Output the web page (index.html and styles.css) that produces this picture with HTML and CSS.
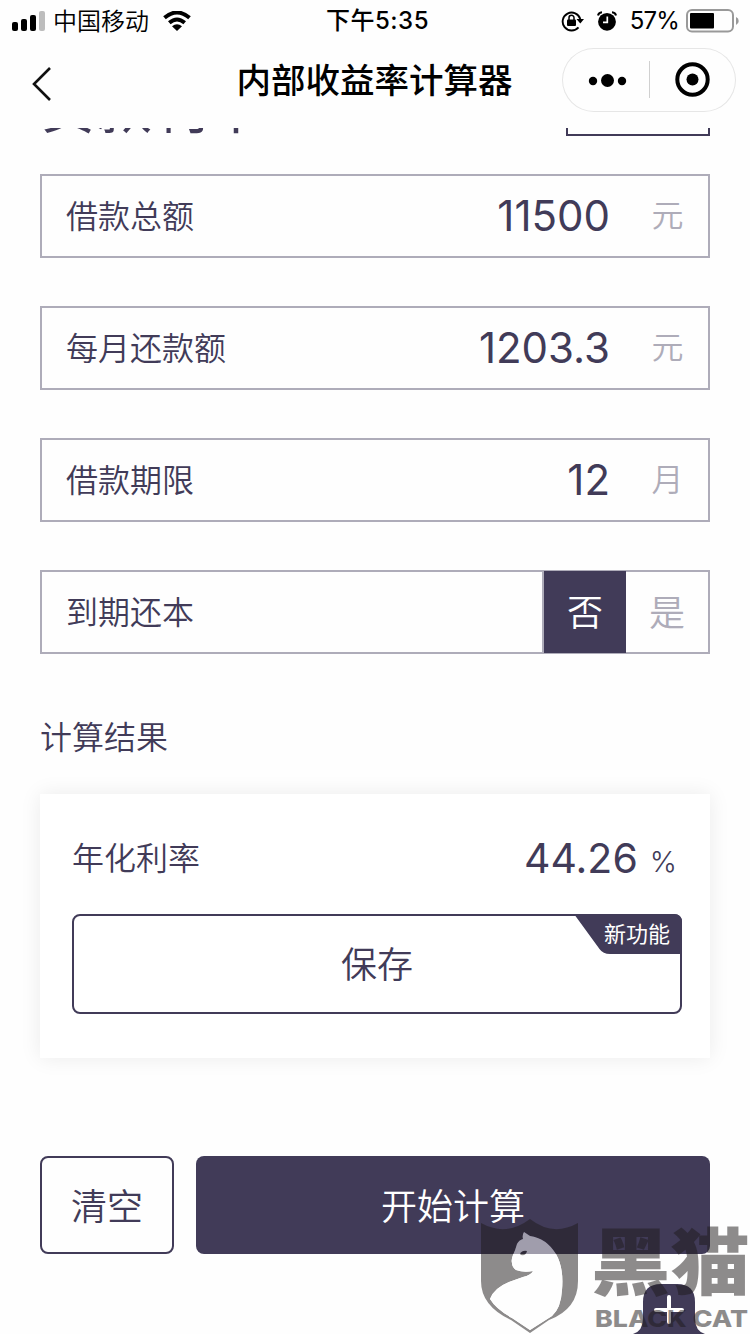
FILE: index.html
```html
<!DOCTYPE html>
<html lang="zh-CN">
<head>
    <meta charset="UTF-8">
    <meta name="viewport" content="width=device-width, initial-scale=1.0">
    <title>内部收益率计算器</title>
    <link rel="stylesheet" href="styles.css">
</head>
<body>
    <div class="status">
        <div class="status-left">
            <svg class="signal" width="34" height="20" viewBox="0 0 34 20">
                <rect x="0" y="11" width="6" height="9" rx="2"/>
                <rect x="9" y="8" width="6" height="12" rx="2"/>
                <rect x="18" y="4" width="6" height="16" rx="2"/>
                <rect x="27" y="0" width="6" height="20" rx="2" fill="#bdbdbd"/>
            </svg>
            <span class="carrier">中国移动</span>
            <svg class="wifi" width="28" height="20" viewBox="0 0 28 20">
                <path d="M1.500 6.800Q14 -3.800 26.500 6.800M6.300 11.800Q14 5.300 21.700 11.800" fill="none" stroke="#000" stroke-width="4"/>
                <path d="M9 15.200Q14 11.300 19 15.200L14 20Z"/>
            </svg>
        </div>
        <span class="time">下午5:35</span>
        <div class="status-right">
            <svg class="lock" width="24" height="22" viewBox="0 0 24 22">
                <path d="M17.500 17.400A9 9 0 1 1 19.300 9" fill="none" stroke="#000" stroke-width="1.900"/>
                <path d="M15.500 9H23L19.300 13.500Z"/>
                <rect x="6" y="9.500" width="9" height="6.500" rx="1"/>
                <path d="M8 10V7.800a2.500 2.500 0 0 1 5 0V10" fill="none" stroke="#000" stroke-width="1.500"/>
            </svg>
            <svg class="alarm" width="20" height="20" viewBox="0 0 20 20">
                <circle cx="10" cy="10.800" r="8.900"/>
                <path d="M1 4.500Q1.500 1.500 5 1.200M19 4.500Q18.500 1.500 15 1.200" fill="none" stroke="#000" stroke-width="2"/>
                <path d="M10.300 5.500V11.300H6" fill="none" stroke="#fff" stroke-width="1.700"/>
            </svg>
            <span class="percent">57%</span>
            <svg class="battery" width="54" height="24" viewBox="0 0 54 24">
                <rect x="1" y="1" width="46" height="21.500" rx="5" fill="none" stroke="#999" stroke-width="2"/>
                <rect x="4" y="4" width="24" height="15.500" rx="1"/>
                <path d="M50 8a4.300 4.300 0 0 1 0 8Z" fill="#999"/>
            </svg>
        </div>
    </div>

    <div class="nav">
        <svg class="back" width="20" height="36" viewBox="0 0 20 36">
            <path d="M18 2L2 18L18 34" fill="none" stroke="#111" stroke-width="2.600"/>
        </svg>
        <h1>内部收益率计算器</h1>
        <div class="capsule">
            <svg width="174" height="64" viewBox="0 0 174 64">
                <circle cx="31" cy="33" r="4.200"/>
                <circle cx="45.500" cy="32.500" r="6.500"/>
                <circle cx="60" cy="33" r="4.200"/>
                <path d="M87.500 13V50" stroke="#d0d0d0"/>
                <circle cx="130.500" cy="31.500" r="15.200" fill="none" stroke="#000" stroke-width="4"/>
                <circle cx="130.500" cy="31.500" r="6"/>
            </svg>
        </div>
    </div>

    <div class="page">
        <div class="mode">
            <h2>贷款利率</h2>
            <div class="mode-select"></div>
        </div>

        <div class="field">
            <label>借款总额</label>
            <span class="value">11500</span>
            <span class="unit">元</span>
        </div>
        <div class="field">
            <label>每月还款额</label>
            <span class="value">1203.3</span>
            <span class="unit">元</span>
        </div>
        <div class="field">
            <label>借款期限</label>
            <span class="value">12</span>
            <span class="unit">月</span>
        </div>
        <div class="field">
            <label>到期还本</label>
            <div class="toggle">
                <span class="option on">否</span>
                <span class="option">是</span>
            </div>
        </div>

        <h3>计算结果</h3>
        <div class="card">
            <div class="rate">
                <label>年化利率</label>
                <span class="rate-value">44.26</span>
                <span class="rate-unit">%</span>
            </div>
            <div class="save">
                保存
                <div class="ribbon">
                    <svg width="108" height="40" viewBox="0 0 108 40">
                        <path d="M0 0H100Q108 0 108 8V40H36Q29 40 25.500 35Z" fill="#413b58"/>
                    </svg>
                    <span>新功能</span>
                </div>
            </div>
        </div>

        <div class="buttons">
            <div class="clear">清空</div>
            <div class="start">开始计算</div>
        </div>
    </div>

    <svg class="add" width="72" height="50" viewBox="0 0 72 50">
        <path d="M0 50Q10 47 10 34V18Q10 0 28 0H44Q62 0 62 18V34Q62 47 72 50Z" fill="#413b58"/>
        <path d="M36 13V38M23 26H49" stroke="#fff" stroke-width="4" stroke-linecap="round"/>
    </svg>

    <svg class="watermark" width="270" height="116" viewBox="0 0 270 116">
        <path fill="#1f1b1b" fill-rule="evenodd" d="M1 5Q26 19 50 1Q73 19 98 5V63Q98 91 69 102L50 115L31 102Q1 88 1 63Z
            M44 14L50 18Q66 20 76 36Q84 50 82 72Q81 90 72 98L50 112L32 100Q16 91 10 81Q14 70 29 64L43 59Q51 57 53 53Q44 55 36 52Q32 49 32 45Q31 42 33 37Q35 33 37 26Q39 22 43 21Q42 17 44 14Z"/>
        <path fill="#fff" d="M44 14L50 18Q66 20 76 36Q84 50 82 72Q81 90 72 98L50 112L32 100Q16 91 10 81Q14 70 29 64L43 59Q51 57 53 53Q44 55 36 52Q32 49 32 45Q31 42 33 37Q35 33 37 26Q39 22 43 21Q42 17 44 14Z"/>
        <path fill="#1f1b1b" d="M40 36Q42 32 47 33Q46 38 41 37Z"/>
        <text class="wm-cn" x="111" y="71" textLength="159" lengthAdjust="spacingAndGlyphs">黑猫</text>
        <text class="wm-en" x="115" y="109" textLength="153" lengthAdjust="spacingAndGlyphs">BLACK CAT</text>
    </svg>
</body>
</html>
```

FILE: styles.css
```css
* {
    margin: 0;
    padding: 0;
    box-sizing: border-box;
}
body {
    position: relative;
    width: 750px;
    height: 1334px;
    overflow: hidden;
    background-color: #fefefe;
    color: #413b58;
    font-family: Inter, "Noto Sans CJK SC", sans-serif;
}
svg {
    display: block;
    flex: none;
}
.status {
    display: grid;
    grid-template-columns: 1fr auto 1fr;
    align-items: center;
    height: 40px;
    padding: 0 10px 0 12px;
    color: #000;
    font-size: 24px;
    line-height: 40px;
}
.status-left,
.status-right {
    display: flex;
    align-items: center;
    height: 40px;
}
.status-right {
    justify-content: flex-end;
}
.carrier {
    margin: 0 14px 0 7px;
    padding-top: 2px;
    font-weight: 350;
}
.time {
    padding: 1px 0 0 3px;
    font-weight: 500;
    letter-spacing: 0.5px;
}
.alarm {
    margin: 0 13px 0 12px;
}
.percent {
    margin-right: 7px;
    padding-top: 1px;
    font-size: 24px;
    letter-spacing: -0.8px;
}

.nav {
    display: grid;
    grid-template-columns: 1fr auto 1fr;
    align-items: center;
    height: 88px;
    padding: 0 14px 8px;
    color: #000;
}
.back {
    margin: 7px 0 0 18px;
}
h1 {
    padding: 2px 1px 0 0;
    font-size: 34.5px;
    font-weight: 500;
    line-height: 50px;
}
.capsule {
    justify-self: end;
    width: 174px;
    height: 64px;
    border-radius: 32px;
    box-shadow: inset 0 0 0 1px #e6e6e6;
}

.page {
    padding: 0 40px;
}
.mode {
    display: flex;
    justify-content: space-between;
    align-items: flex-end;
    height: 8px;
    margin-bottom: 38px;
    overflow: hidden;
}
h2 {
    margin-bottom: -12px;
    font-size: 56px;
    font-weight: 400;
    line-height: 80px;
}
.mode-select {
    width: 144px;
    height: 82px;
    border: solid 2px #413b58;
}
.field {
    display: flex;
    align-items: center;
    height: 84px;
    margin-bottom: 48px;
    border: solid 2px #aeacb9;
    padding-left: 24px;
}
label {
    flex: 1;
    padding-bottom: 5px;
    font-size: 32px;
    font-weight: 350;
}
.value {
    padding-bottom: 2px;
    font-size: 42px;
}
.unit {
    width: 98px;
    padding: 0 0 6px 17px;
    text-align: center;
    font-size: 32px;
    font-weight: 350;
    color: #aeacb9;
}
.toggle {
    display: flex;
    height: 82px;
    border-left: solid 2px #aeacb9;
    font-size: 36px;
    font-weight: 350;
    line-height: 85px;
    text-align: center;
}
.option {
    width: 82px;
    color: #aeacb9;
}
.option.on {
    background-color: #413b58;
    color: #fff;
}

h3 {
    margin-top: 61px;
    font-size: 32px;
    font-weight: 350;
    line-height: 46px;
}
.card {
    height: 264px;
    margin-top: 33px;
    padding: 36px 28px 0 32px;
    background-color: #fff;
    box-shadow: 0 0 20px rgba(0, 0, 0, 0.08);
}
.rate {
    display: flex;
    align-items: center;
    height: 84px;
    padding: 0 5px 28px 0;
    line-height: 56px;
}
.rate label {
    padding: 1px 0 0;
}
.rate-value {
    font-size: 41px;
}
.rate-unit {
    margin-left: 12px;
    padding-top: 8px;
    font-size: 29px;
    font-weight: 300;
}
.save {
    position: relative;
    height: 100px;
    border: solid 2px #413b58;
    border-radius: 8px;
    font-size: 36px;
    font-weight: 350;
    line-height: 98px;
    text-align: center;
}
.ribbon {
    position: absolute;
    top: -2px;
    right: -2px;
    font-weight: 400;
}
.ribbon span {
    position: absolute;
    top: 0;
    right: 12px;
    font-size: 22px;
    line-height: 40px;
    color: #fff;
    white-space: nowrap;
}

.buttons {
    display: flex;
    gap: 22px;
    margin-top: 98px;
    font-size: 36px;
    font-weight: 350;
    line-height: 102px;
    text-align: center;
}
.clear {
    width: 134px;
    height: 98px;
    border: solid 2px #413b58;
    border-radius: 8px;
    line-height: 98px;
}
.start {
    flex: 1;
    height: 98px;
    border-radius: 8px;
    background-color: #413b58;
    color: #fff;
}

/* floating layers at the bottom */
.add {
    position: absolute;
    left: 633px;
    top: 1284px;
}
.watermark {
    position: absolute;
    left: 480px;
    top: 1218px;
    opacity: 0.5;
}
.wm-cn {
    fill: #1f1b1b;
    font-size: 73px;
    font-weight: 900;
    font-family: "Noto Sans CJK SC", sans-serif;
}
.wm-en {
    fill: #1f1b1b;
    font-size: 23px;
    font-weight: 800;
}
```
